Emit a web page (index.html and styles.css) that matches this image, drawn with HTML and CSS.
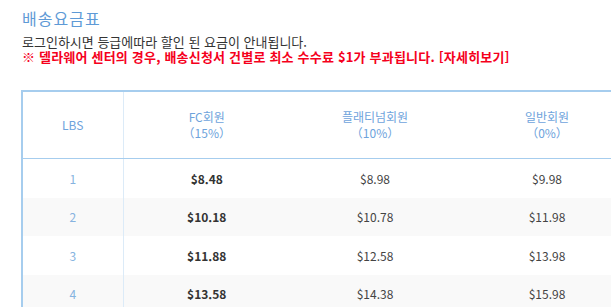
FILE: index.html
```html
<!DOCTYPE html>
<html lang="ko">
<head>
<meta charset="utf-8">
<title>배송요금표</title>
<link rel="stylesheet" href="styles.css">
</head>
<body>
<div class="wrap">
  <h2 class="title">배송요금표</h2>
  <p class="info">로그인하시면 등급에따라 할인 된 요금이 안내됩니다.</p>
  <p class="notice">※ 델라웨어 센터의 경우, 배송신청서 건별로 최소 수수료 $1가 부과됩니다. [자세히보기]</p>
  <table class="rates">
    <colgroup>
      <col class="c-lbs">
      <col class="c-fc">
      <col class="c-pt">
      <col class="c-gen">
    </colgroup>
    <thead>
      <tr>
        <th class="lbs">LBS</th>
        <th>FC회원<br>（15%）</th>
        <th>플래티넘회원<br>（10%）</th>
        <th>일반회원<br>（0%）</th>
      </tr>
    </thead>
    <tbody>
      <tr><td class="lbs">1</td><td class="fc">$8.48</td><td>$8.98</td><td>$9.98</td></tr>
      <tr class="alt"><td class="lbs">2</td><td class="fc">$10.18</td><td>$10.78</td><td>$11.98</td></tr>
      <tr><td class="lbs">3</td><td class="fc">$11.88</td><td>$12.58</td><td>$13.98</td></tr>
      <tr class="alt"><td class="lbs">4</td><td class="fc">$13.58</td><td>$14.38</td><td>$15.98</td></tr>
    </tbody>
  </table>
</div>
</body>
</html>
```

FILE: styles.css
```css
html, body {
  margin: 0;
  padding: 0;
  overflow: hidden;
  background: #ffffff;
}

body {
  font-family: "Noto Sans CJK KR", "Noto Sans", sans-serif;
  font-size: 12px;
  color: #333333;
}

.wrap {
  padding: 8px 0 0 21px;
}

.title {
  margin: 0;
  font-size: 16px;
  line-height: 20px;
  letter-spacing: 1px;
  font-weight: normal;
  color: #5e9ad6;
  padding-left: 1px;
}

.info,
.notice {
  margin: 0;
  font-size: 13px;
  line-height: 15px;
  padding-left: 1px;
}

.info {
  margin-top: 6px;
  color: #333333;
}

.notice {
  color: #f5001c;
  font-weight: bold;
  letter-spacing: 0.2px;
}

.rates {
  margin-top: 26px;
  width: 612px;
  table-layout: fixed;
  border-collapse: collapse;
  border-top: 2px solid #a6cdee;
  border-left: 2px solid #a6cdee;
}

.c-lbs { width: 101px; }
.c-fc { width: 167px; }
.c-pt { width: 170px; }
.c-gen { width: 174px; }

.rates th {
  height: 66px;
  padding: 0;
  font-weight: normal;
  font-size: 12px;
  line-height: 16px;
  color: #6ea3dc;
  text-align: center;
  vertical-align: middle;
  border-bottom: 1px solid #a6cdee;
}

.rates td {
  height: 38.5px;
  padding: 0;
  text-align: center;
  vertical-align: middle;
  font-size: 12px;
  color: #444444;
}

.rates .lbs {
  border-right: 1px solid #dcebf8;
}

.rates td.lbs {
  color: #86b3e0;
}

.rates td.fc {
  font-weight: bold;
  color: #333333;
}

.rates tr.alt td {
  background: #f9f9f9;
}
```
